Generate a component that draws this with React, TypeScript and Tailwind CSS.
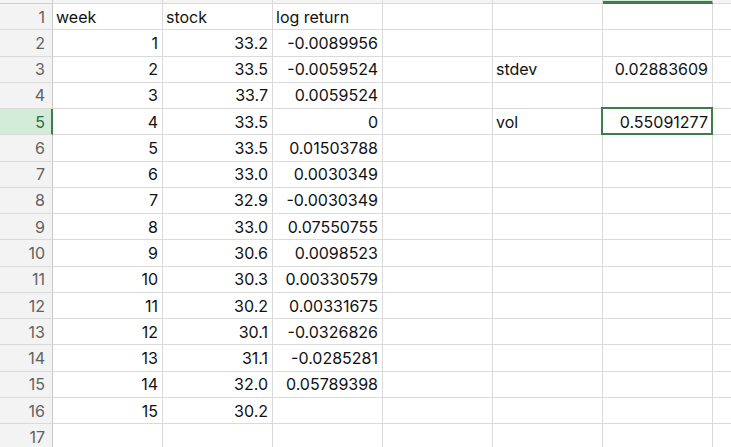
import React from "react";

const weeks = ["1","2","3","4","5","6","7","8","9","10","11","12","13","14","15"];
const stock = ["33.2","33.5","33.7","33.5","33.5","33.0","32.9","33.0","30.6","30.3","30.2","30.1","31.1","32.0","30.2"];
const logr = ["-0.0089956","-0.0059524","0.0059524","0","0.01503788","0.0030349","-0.0030349","0.07550755","0.0098523","0.00330579","0.00331675","-0.0326826","-0.0285281","0.05789398",""];

type Cell = { t: string; right?: boolean };

function buildRows(): Cell[][] {
  const rows: Cell[][] = [];
  rows.push([{ t: "week" }, { t: "stock" }, { t: "log return" }, { t: "" }, { t: "" }]);
  for (let i = 0; i < 15; i++) {
    const r: Cell[] = [
      { t: weeks[i], right: true },
      { t: stock[i], right: true },
      { t: logr[i], right: true },
      { t: "" },
      { t: "" },
    ];
    rows.push(r);
  }
  rows.push([{ t: "" }, { t: "" }, { t: "" }, { t: "" }, { t: "" }]);
  // row 3 (index 2) stdev, row 5 (index 4) vol
  rows[2][4] = { t: "stdev" };
  rows[4][4] = { t: "vol" };
  rows[2].push({ t: "0.02883609", right: true });
  rows[4].push({ t: "0.55091277", right: true });
  rows.forEach((r) => {
    while (r.length < 6) r.push({ t: "" });
  });
  return rows;
}

export default function App() {
  const rows = buildRows();
  return (
    <div
      className="w-[731px] h-[447px] overflow-hidden bg-white text-[16px] text-[#111]"
      style={{ fontFamily: "Inter, 'Liberation Sans', sans-serif" }}
    >
      {/* column header strip (cut off) */}
      <div className="flex h-[4px]">
        <div className="w-[53px] shrink-0 bg-[#f3f3f3] border-r border-b border-[#d0d0d0]" />
        {[0, 1, 2, 3, 4].map((i) => (
          <div key={i} className="w-[110px] shrink-0 bg-[#f5f5f5] border-r border-b border-[#dadada]" />
        ))}
        <div className="w-[110px] shrink-0 bg-[#d2ecd9] border-r border-[#dadada] border-b-[3px] border-b-[#3f7c4c]" />
        <div className="flex-1 bg-[#f5f5f5] border-b border-[#dadada]" />
      </div>
      {rows.map((r, ri) => {
        const sel = ri === 4;
        return (
          <div key={ri} className="flex h-[26.27px]">
            <div
              className={
                sel
                  ? "w-[53px] shrink-0 flex items-center justify-end pr-[6px] bg-[#d2ecd9] text-[#2f6a3e] border-r-2 border-[#3f7c4c] border-b border-b-[#dadada]"
                  : "w-[53px] shrink-0 flex items-center justify-end pr-[7px] bg-[#f3f3f3] text-[#616161] border-r border-[#c8c8c8] border-b border-b-[#dadada]"
              }
            >
              <span className="leading-[20px]">{ri + 1}</span>
            </div>
            {r.map((c, ci) => {
              const isSel = sel && ci === 5;
              return (
                <div
                  key={ci}
                  className={
                    "relative w-[110px] shrink-0 flex items-center border-r border-b border-[#dadada] " +
                    (c.right ? "justify-end pr-[4px]" : "justify-start pl-[3px]")
                  }
                >
                  <span className="leading-[20px] whitespace-nowrap">{c.t}</span>
                  {isSel && (
                    <div className="absolute left-[-2px] top-[-2px] right-[-1px] bottom-[-1px] border-2 border-[#3f7c4c]" />
                  )}
                </div>
              );
            })}
            <div className="flex-1 border-b border-[#dadada]" />
          </div>
        );
      })}
    </div>
  );
}
